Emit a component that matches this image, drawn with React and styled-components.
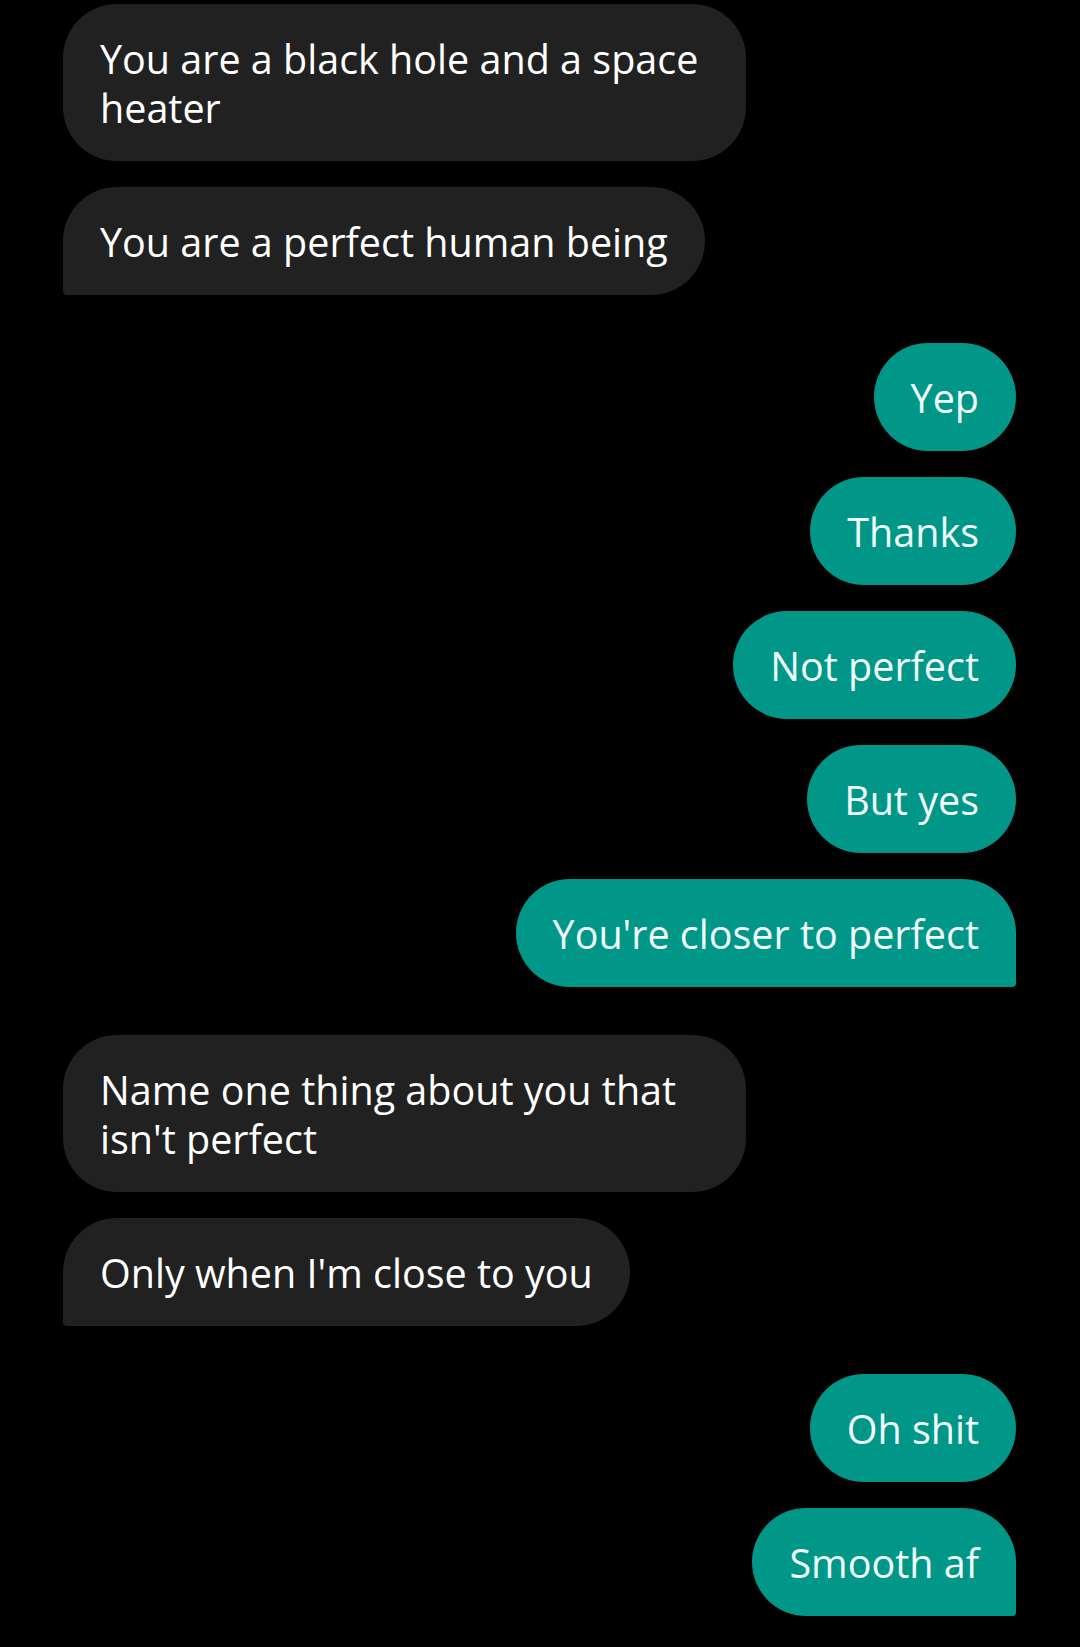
import React from 'react';
import styled, { createGlobalStyle } from 'styled-components';

const GlobalStyle = createGlobalStyle`
  html, body {
    margin: 0;
    padding: 0;
    background: #000;
  }
  body {
    font-family: "Open Sans", "Noto Sans", sans-serif;
  }
`;

const Thread = styled.div`
  display: flex;
  flex-direction: column;
  gap: 48px;
  padding: 4px 64px 29px 63px;
  min-height: 1647px;
  box-sizing: border-box;
`;

const Group = styled.div`
  display: flex;
  flex-direction: column;
  gap: 26px;
  align-items: ${(p) => (p.$mine ? 'flex-end' : 'flex-start')};
`;

const Bubble = styled.div`
  max-width: 609px;
  padding: 31px 37px 28px 37px;
  font-size: 39.5px;
  line-height: 49px;
  border-radius: 54px;
  color: ${(p) => (p.$mine ? '#f1fbf9' : '#ffffff')};
  background: ${(p) => (p.$mine ? '#009688' : '#212121')};
  ${(p) => p.$last && (p.$mine ? 'border-bottom-right-radius: 4px;' : 'border-bottom-left-radius: 4px;')}
`;

const thread = [
  { mine: false, lines: ['You are a black hole and a space heater', 'You are a perfect human being'] },
  { mine: true, lines: ['Yep', 'Thanks', 'Not perfect', 'But yes', "You're closer to perfect"] },
  { mine: false, lines: ["Name one thing about you that isn't perfect", "Only when I'm close to you"] },
  { mine: true, lines: ['Oh shit', 'Smooth af'] },
];

export default function App() {
  return (
    <>
      <GlobalStyle />
      <Thread>
        {thread.map((g, i) => (
          <Group key={i} $mine={g.mine}>
            {g.lines.map((t, j) => (
              <Bubble key={j} $mine={g.mine} $last={j === g.lines.length - 1}>
                {t}
              </Bubble>
            ))}
          </Group>
        ))}
      </Thread>
    </>
  );
}
